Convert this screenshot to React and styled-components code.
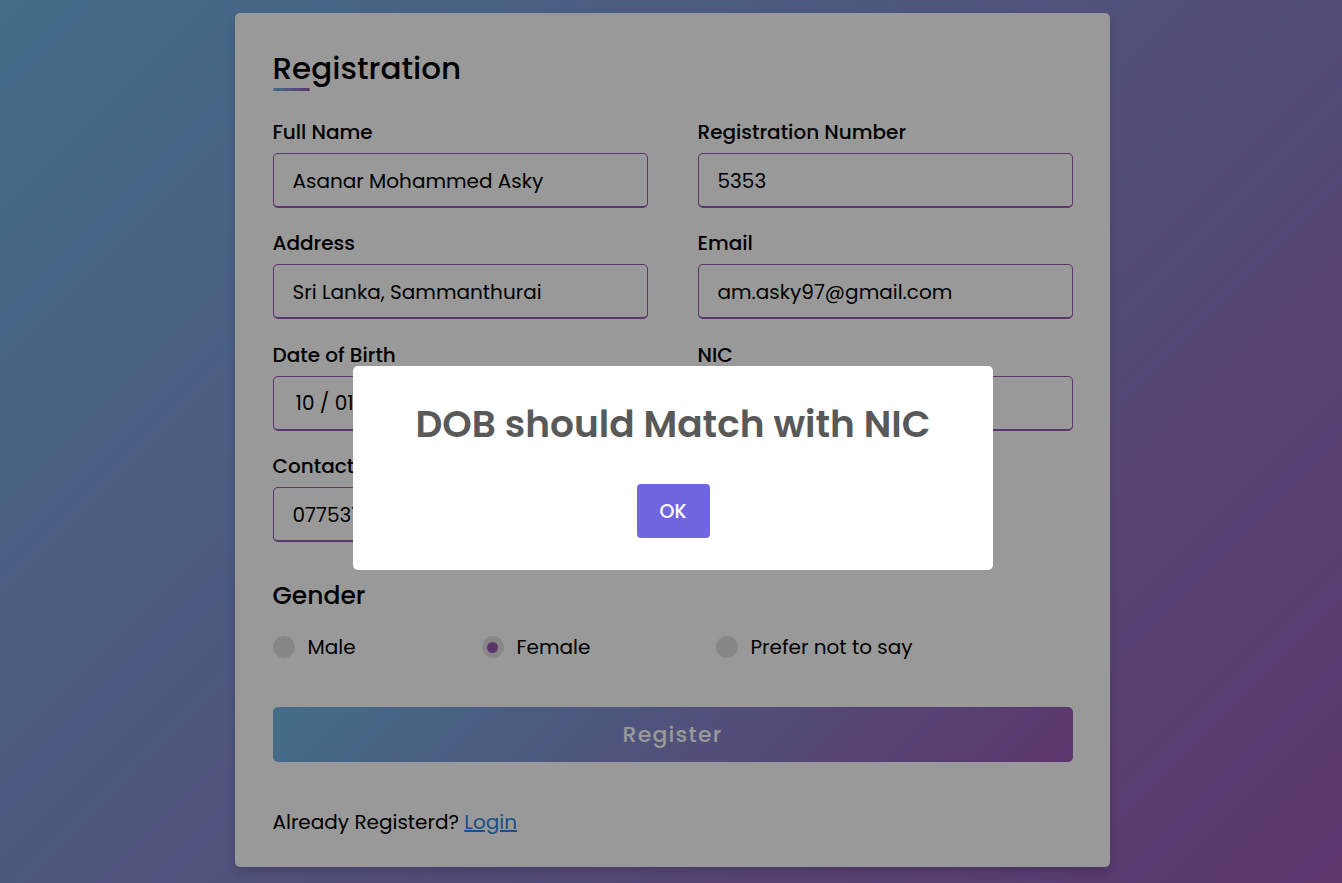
import React from 'react';
import styled, { createGlobalStyle } from 'styled-components';

const GlobalStyle = createGlobalStyle`
  * { box-sizing: border-box; margin: 0; padding: 0; }
  html, body { height: 100%; }
  body {
    font-family: Poppins, "Inter", "Noto Sans", sans-serif;
    background: linear-gradient(135deg, #71b7e6, #9b59b6);
    overflow: hidden;
  }
`;

const Page = styled.div`
  height: 883px;
  display: flex;
  justify-content: center;
  align-items: flex-start;
  padding: 13px 0 0 2px;
`;

const Card = styled.div`
  width: 875px;
  height: 854px;
  background: #fff;
  border-radius: 5px;
  box-shadow: 0 5px 10px rgba(0, 0, 0, 0.15);
  padding: 39px 37px 0 38px;
`;

const Title = styled.h1`
  position: relative;
  font-size: 31px;
  font-weight: 500;
  line-height: 32px;
  color: #000;
  margin-bottom: 33px;
  &::before {
    content: '';
    position: absolute;
    left: 0;
    bottom: -7px;
    width: 37px;
    height: 3px;
    border-radius: 5px;
    background: linear-gradient(135deg, #71b7e6, #9b59b6);
  }
`;

const Fields = styled.div`
  display: grid;
  grid-template-columns: 375px 375px;
  column-gap: 50px;
  row-gap: 20.4px;
`;

const Field = styled.div`
  display: flex;
  flex-direction: column;
  gap: 6px;
`;

const Label = styled.label`
  font-size: 20px;
  font-weight: 500;
  line-height: 30px;
  color: #000;
`;

const Input = styled.input`
  height: 55px;
  width: 100%;
  border: 1px solid #9b59b6;
  border-bottom-width: 2px;
  border-radius: 5px;
  padding: 1px 19px 0 ${p => (p.$date ? 22 : 19)}px;
  font-family: inherit;
  font-size: 20px;
  color: #000;
  background: #fff;
  outline: none;
`;

const GenderTitle = styled.div`
  font-size: 25px;
  font-weight: 500;
  line-height: 36px;
  margin-top: 36px;
  color: #000;
`;

const Options = styled.div`
  display: flex;
  margin-top: 18px;
`;

const Option = styled.label`
  display: flex;
  align-items: center;
  gap: 13px;
  width: ${p => p.$w}px;
  font-size: 20px;
  line-height: 30px;
  color: #000;
`;

const Dot = styled.span`
  width: 22px;
  height: 22px;
  border-radius: 50%;
  background: #e2e2e2;
  display: flex;
  align-items: center;
  justify-content: center;
  &::after {
    content: '';
    width: 11px;
    height: 11px;
    border-radius: 50%;
    background: ${p => (p.$on ? '#9b59b6' : 'transparent')};
  }
`;

const RegisterButton = styled.button`
  display: block;
  margin-top: 45px;
  width: 800px;
  height: 55px;
  border: none;
  border-radius: 5px;
  font-family: inherit;
  font-size: 22px;
  font-weight: 500;
  letter-spacing: 1.2px;
  color: #fff;
  background: linear-gradient(135deg, #71b7e6, #9b59b6);
`;

const Footer = styled.p`
  margin-top: 45px;
  font-size: 20px;
  line-height: 30px;
  color: #000;
  a { color: #2a85e8; }
`;

const Overlay = styled.div`
  position: fixed;
  inset: 0;
  background: rgba(0, 0, 0, 0.4);
  display: flex;
  justify-content: center;
  align-items: flex-start;
  padding: 366px 0 0 4px;
`;

const Modal = styled.div`
  width: 640px;
  height: 204px;
  background: #fff;
  border-radius: 5px;
  display: flex;
  flex-direction: column;
  align-items: center;
  padding-top: 34px;
`;

const ModalTitle = styled.h2`
  font-size: 37.5px;
  font-weight: 600;
  line-height: 48px;
  color: #595959;
`;

const OkButton = styled.button`
  margin-top: 36px;
  width: 73px;
  height: 54px;
  border: none;
  border-radius: 4px;
  background: #7066e0;
  color: #fff;
  font-family: inherit;
  font-size: 19px;
  font-weight: 500;
`;

const fields = [
  ['Full Name', 'Asanar Mohammed Asky'],
  ['Registration Number', '5353'],
  ['Address', 'Sri Lanka, Sammanthurai'],
  ['Email', 'am.asky97@gmail.com'],
  ['Date of Birth', '10 / 01 / 1997', true],
  ['NIC', '199701000000'],
  ['Contact Number', '0775378945'],
];

export default function App() {
  return (
    <>
      <GlobalStyle />
      <Page>
        <Card>
          <Title>Registration</Title>
          <Fields>
            {fields.map(([label, value, date]) => (
              <Field key={label}>
                <Label>{label}</Label>
                <Input $date={date} defaultValue={value} />
              </Field>
            ))}
          </Fields>
          <GenderTitle>Gender</GenderTitle>
          <Options>
            <Option $w={209}><Dot />Male</Option>
            <Option $w={234}><Dot $on />Female</Option>
            <Option $w={300}><Dot />Prefer not to say</Option>
          </Options>
          <RegisterButton>Register</RegisterButton>
          <Footer>Already Registerd? <a href="#">Login</a></Footer>
        </Card>
      </Page>
      <Overlay>
        <Modal>
          <ModalTitle>DOB should Match with NIC</ModalTitle>
          <OkButton>OK</OkButton>
        </Modal>
      </Overlay>
    </>
  );
}
